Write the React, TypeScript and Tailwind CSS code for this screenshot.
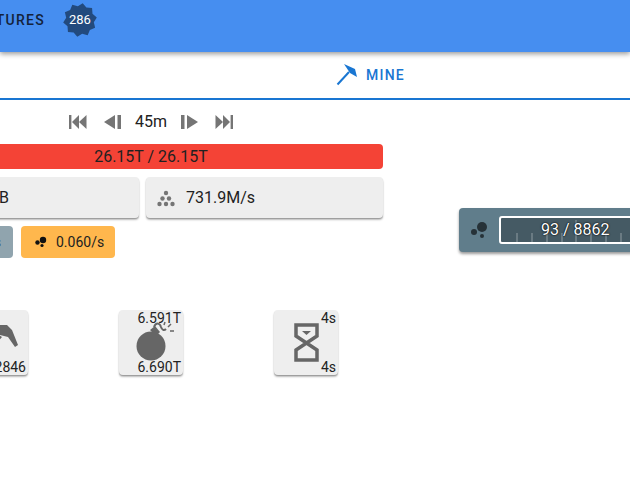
const star = Array.from({ length: 20 }, (_, i) => {
    const a = (i * Math.PI) / 10 - Math.PI / 2 + 0.16
    const r = i % 2 ? 14 : 17
    return `${17 + r * Math.cos(a)},${17 + r * Math.sin(a)}`
}).join(" ")

const ticks = [16, 31, 46, 61, 75, 90, 105, 120]
const cardShadow = "shadow-[0_1px_1px_rgba(0,0,0,0.2),0_2px_2px_rgba(0,0,0,0.25)]"

function Tile({ top, bottom, children }: { top?: string; bottom: string; children: React.ReactNode }) {
    return (
        <div className={`relative w-[64px] h-[65px] shrink-0 rounded bg-[#eeeeee] flex items-center justify-center ${cardShadow}`}>
            {children}
            {top && <span className="absolute right-[2px] top-0 text-[14px] leading-[16px] text-[#222]">{top}</span>}
            <span className="absolute right-[2px] bottom-0 text-[14px] leading-[16px] text-[#222]">{bottom}</span>
        </div>
    )
}

function Dots({ className }: { className: string }) {
    return (
        <svg width="18" height="18" viewBox="0 0 18 18" className={className} fill="currentColor">
            <circle cx="9" cy="4" r="2.2" />
            <circle cx="5.5" cy="9.5" r="2.2" />
            <circle cx="12" cy="9.5" r="2.2" />
            <circle cx="2.5" cy="15" r="2.2" />
            <circle cx="9" cy="15" r="2.2" />
            <circle cx="15.5" cy="15" r="2.2" />
        </svg>
    )
}

function Double({ flip, className }: { flip?: boolean; className: string }) {
    return (
        <svg width="18" height="14" viewBox="0 0 18 14" fill="currentColor" className={`${className} ${flip ? "-scale-x-100" : ""}`}>
            <rect x="0" y="0" width="2.4" height="14" />
            <path d="M3 7 L10 0 V14 Z" />
            <path d="M10 7 L17.5 0 V14 Z" />
        </svg>
    )
}

function Single({ flip, className }: { flip?: boolean; className: string }) {
    return (
        <svg width="17" height="14" viewBox="0 0 17 14" fill="currentColor" className={`${className} ${flip ? "-scale-x-100" : ""}`}>
            <path d="M0 7 L11 0 V14 Z" />
            <rect x="13.5" y="0" width="3.5" height="14" />
        </svg>
    )
}

export default function App() {
    return (
        <div className="w-[630px] h-[500px] overflow-hidden bg-white font-['Roboto',sans-serif] text-[#212121]">
            <header className="relative z-10 h-[52px] bg-[#468ef0] shadow-[0_2px_5px_rgba(0,0,0,0.4)] flex items-start">
                <span className="ml-[-32px] mt-[12px] text-[14px] leading-[16px] font-medium tracking-[1.25px] text-[#14233a]">FEATURES</span>
                <div className="relative ml-[18px] mt-[3px] w-[34px] h-[34px] flex items-center justify-center">
                    <svg width="34" height="34" viewBox="0 0 34 34" className="absolute inset-0">
                        <polygon points={star} fill="#224a7e" />
                    </svg>
                    <span className="relative text-[13px] text-white">286</span>
                </div>
            </header>

            <nav className="h-[48px] border-b-2 border-[#1976d2] flex items-center justify-end pr-[225px]">
                <svg width="22" height="22" viewBox="0 0 22 22" className="mr-[8px] text-[#1976d2]" fill="currentColor">
                    <path d="M1.5 20.5 L13 8" stroke="currentColor" strokeWidth="2" />
                    <path d="M8 0 L19 5 L21 13 L14 9 Z" />
                </svg>
                <span className="text-[14px] font-medium tracking-[1.25px] text-[#1976d2]">MINE</span>
            </nav>

            <div className="flex items-start">
                <main className="ml-[-81px] w-[464px] shrink-0">
                    <div className="h-[44px] flex items-center justify-center text-[#757575]">
                        <Double className="mr-[17px]" />
                        <Single className="mr-[14px]" />
                        <span className="text-[16px] text-[#212121]">45m</span>
                        <Single flip className="ml-[14px]" />
                        <Double flip className="ml-[17px]" />
                    </div>

                    <div className="h-[25px] rounded bg-[#f44336] flex items-center justify-center text-[16px] text-[#212121]">26.15T / 26.15T</div>

                    <div className="mt-[8px] flex gap-[7px]">
                        <div className={`w-[220px] h-[41px] rounded bg-[#eeeeee] flex items-center justify-end pr-[130px] text-[16px] ${cardShadow}`}>1.2B</div>
                        <div className={`w-[237px] h-[41px] rounded bg-[#eeeeee] flex items-center pl-[11px] text-[16px] ${cardShadow}`}>
                            <Dots className="text-[#757575] mr-[11px]" />
                            731.9M/s
                        </div>
                    </div>

                    <div className="mt-[8px] flex gap-[8px] justify-end pr-[268px] h-[32px]">
                        <div className="w-[60px] rounded bg-[#90a4ae] flex items-center justify-end pr-[12px] text-[14px]">1/s</div>
                        <div className="w-[94px] rounded bg-[#ffb74d] flex items-center pl-[13px] text-[14px]">
                            <svg width="14" height="14" viewBox="0 0 14 14" fill="#111" className="mr-[8px]">
                                <circle cx="9" cy="5" r="3.2" />
                                <circle cx="3.5" cy="7.5" r="2.2" />
                                <circle cx="8" cy="10.5" r="1.6" />
                            </svg>
                            0.060/s
                        </div>
                    </div>
                </main>

                <aside className="ml-[76px] mt-[108px] w-[200px] h-[44px] shrink-0 rounded bg-[#607d8b] shadow-[0_2px_3px_rgba(0,0,0,0.4)] flex items-center pl-[11px]">
                    <svg width="18" height="18" viewBox="0 0 18 18" fill="#263238" className="mr-[11px] shrink-0">
                        <circle cx="12" cy="6" r="5" />
                        <circle cx="4" cy="11" r="3" />
                        <circle cx="12" cy="15" r="2" />
                    </svg>
                    <div className="relative h-[28px] w-[180px] shrink-0 rounded-[3px] border-2 border-white bg-[#455a64] flex items-center justify-start">
                        <svg width="130" height="24" viewBox="0 0 130 24" className="absolute left-0 top-0">
                            {ticks.map((x, i) => (
                                <line key={x} x1={x} x2={x} y1={i === 4 ? 2 : 15} y2="24" stroke="#fff" strokeOpacity="0.4" />
                            ))}
                        </svg>
                        <span className="relative ml-[40px] text-[16px] text-white [text-shadow:0_0_2px_#000,0_0_1px_#000]">93 / 8862</span>
                    </div>
                </aside>
            </div>

            <div className="ml-[-36px] mt-[52px] flex gap-[91px]">
                <Tile bottom="2846">
                    <svg width="64" height="65" viewBox="0 0 64 65" fill="#666">
                        <path d="M30 15 L43 15 L48 20 L54 35 L51 37 L44 27 L36 25 L30 25 Z" />
                        <path d="M35 25 L28 33 L31 35 L38 27 Z" />
                    </svg>
                </Tile>
                <Tile top="6.591T" bottom="6.690T">
                    <svg width="64" height="65" viewBox="0 0 64 65">
                        <circle cx="32" cy="36" r="14.5" fill="#666" />
                        <path d="M31 20 L36 16 L41 22 L37 26 Z" fill="#666" />
                        <path d="M35 17 C37 12 41 13 42 17 C43 20 45 21 47 19" stroke="#666" strokeWidth="2" fill="none" />
                        <path d="M45 15 L46 12 M49 17 L52 14 M51 21 L55 21" stroke="#666" strokeWidth="1.5" />
                    </svg>
                </Tile>
                <Tile top="4s" bottom="4s">
                    <svg width="25" height="39" viewBox="0 0 25 39" fill="none" stroke="#666" strokeWidth="3.5">
                        <path d="M2 2 H23 V13 L2 27 V37 H23 V27 L2 13 Z" />
                        <path d="M8 8 H17 L12.5 12 Z" fill="#666" stroke="none" />
                    </svg>
                </Tile>
            </div>
        </div>
    )
}
